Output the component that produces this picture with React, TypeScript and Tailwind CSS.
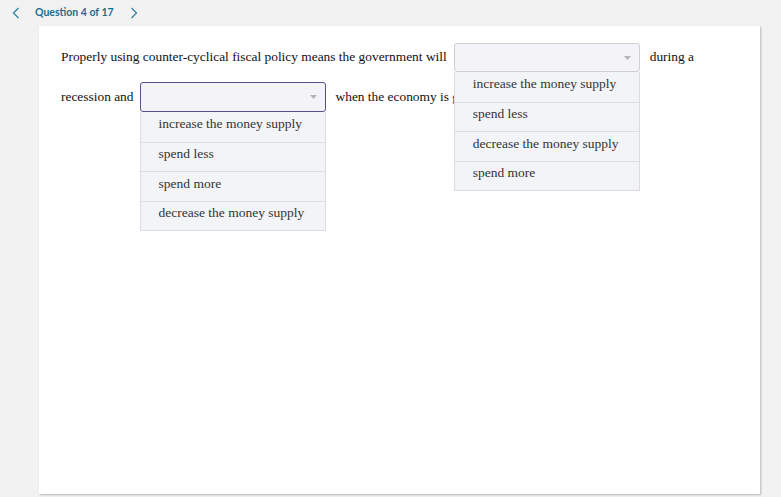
import React from "react";

const serif = { fontFamily: '"Liberation Serif", "Times New Roman", serif' };

function Chevron({ dir }: { dir: "left" | "right" }) {
  return (
    <svg width="8" height="12" viewBox="0 0 8 12" fill="none" className="block">
      {dir === "left" ? (
        <path d="M6.5 1L1.5 6L6.5 11" stroke="#2a85a6" strokeWidth="1.3" />
      ) : (
        <path d="M1.5 1L6.5 6L1.5 11" stroke="#2a85a6" strokeWidth="1.3" />
      )}
    </svg>
  );
}

function Caret() {
  return (
    <svg width="7" height="4" viewBox="0 0 7 4" className="block">
      <path d="M0 0H7L3.5 4Z" fill="#b5b5b5" />
    </svg>
  );
}

function Select({ focused, options }: { focused?: boolean; options: string[] }) {
  return (
    <div className="relative w-[186px] shrink-0">
      <div
        className={
          focused
            ? "h-[30px] rounded-[3px] border border-[#5e4b8b] bg-[#f4f4f8] flex items-center justify-end pr-[8px]"
            : "h-[29px] rounded-[3px] border border-[#cfcfd4] bg-[#f4f4f8] flex items-center justify-end pr-[8px]"
        }
      >
        <Caret />
      </div>
      <div className="absolute left-0 top-full w-[186px] z-10 bg-[#f3f4f8] border border-[#dcdce0] border-t-0">
        {options.map((o, i) => (
          <div
            key={o}
            className={
              "h-[29.5px] flex items-center pl-[18px] pb-[5px] text-[13.5px] text-[#333]" +
              (i > 0 ? " border-t border-[#dedee3]" : "")
            }
            style={serif}
          >
            {o}
          </div>
        ))}
      </div>
    </div>
  );
}

export default function App() {
  return (
    <div className="w-[781px] h-[497px] bg-[#f2f2f2] overflow-hidden">
      <div className="h-[26px] flex items-center pl-[12px]">
        <Chevron dir="left" />
        <span
          className="ml-[15px] text-[10.5px] font-bold text-[#1c6c8c]"
          style={{ fontFamily: 'Lato, "Open Sans", sans-serif' }}
        >
          Question 4 of 17
        </span>
        <span className="ml-[16px]">
          <Chevron dir="right" />
        </span>
      </div>
      <div
        className="ml-[39px] w-[721px] h-[468px] bg-white shadow-[1px_1px_2px_rgba(0,0,0,0.25)] pl-[22px] pt-[17px] text-[13.4px] text-[#111]"
        style={serif}
      >
        <div className="flex items-center h-[29px]">
          <span>Properly using counter-cyclical fiscal policy means the government will</span>
          <div className="ml-[7px] relative z-20">
            <Select
              options={[
                "increase the money supply",
                "spend less",
                "decrease the money supply",
                "spend more",
              ]}
            />
          </div>
          <span className="ml-[10px]">during a</span>
        </div>
        <div className="flex items-center h-[30px] mt-[10px]">
          <span>recession and</span>
          <div className="ml-[6px] relative z-10">
            <Select
              focused
              options={[
                "increase the money supply",
                "spend less",
                "spend more",
                "decrease the money supply",
              ]}
            />
          </div>
          <span className="ml-[10px] whitespace-nowrap">when the economy is growing.</span>
        </div>
      </div>
    </div>
  );
}
